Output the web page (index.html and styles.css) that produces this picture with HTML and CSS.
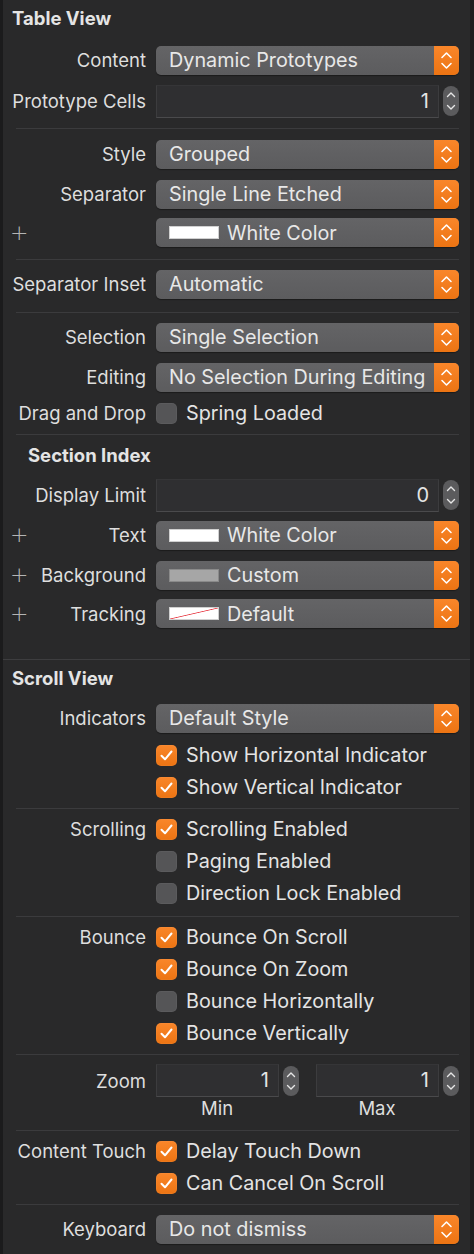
FILE: index.html
```html
<!DOCTYPE html>
<html>
<head>
<meta charset="utf-8">
<link rel="stylesheet" href="styles.css">
</head>
<body>
<div class="panel">
  <div class="title">Table View</div>

  <div class="row r-content"><span class="lbl">Content</span>
    <div class="popup"><span class="ptext">Dynamic Prototypes</span><span class="arrow"><svg viewBox="0 0 25 29" width="25" height="29"><path d="M8 11.5 L12.5 7 L17 11.5 M8 17.5 L12.5 22 L17 17.5" fill="none" stroke="#fff" stroke-width="1.6" stroke-linecap="round" stroke-linejoin="round"/></svg></span></div>
  </div>
  <div class="row r-field"><span class="lbl">Prototype Cells</span>
    <div class="numctl"><div class="field">1</div><div class="stepper"><svg viewBox="0 0 16 30" width="16" height="30"><path d="M4.5 10.5 L8 7 L11.5 10.5 M4.5 19.5 L8 23 L11.5 19.5" fill="none" stroke="#e6e6e6" stroke-width="1.4" stroke-linecap="round" stroke-linejoin="round"/></svg></div></div>
  </div>

  <div class="sep sep-a"></div>

  <div class="row r-style"><span class="lbl">Style</span>
    <div class="popup"><span class="ptext">Grouped</span><span class="arrow"><svg viewBox="0 0 25 29" width="25" height="29"><path d="M8 11.5 L12.5 7 L17 11.5 M8 17.5 L12.5 22 L17 17.5" fill="none" stroke="#fff" stroke-width="1.6" stroke-linecap="round" stroke-linejoin="round"/></svg></span></div>
  </div>
  <div class="row"><span class="lbl">Separator</span>
    <div class="popup"><span class="ptext">Single Line Etched</span><span class="arrow"><svg viewBox="0 0 25 29" width="25" height="29"><path d="M8 11.5 L12.5 7 L17 11.5 M8 17.5 L12.5 22 L17 17.5" fill="none" stroke="#fff" stroke-width="1.6" stroke-linecap="round" stroke-linejoin="round"/></svg></span></div>
  </div>
  <div class="row r-short"><span class="lbl"><span class="plus">+</span></span>
    <div class="popup"><span class="swatch sw-white"></span><span class="ptext sw-text">White Color</span><span class="arrow"><svg viewBox="0 0 25 29" width="25" height="29"><path d="M8 11.5 L12.5 7 L17 11.5 M8 17.5 L12.5 22 L17 17.5" fill="none" stroke="#fff" stroke-width="1.6" stroke-linecap="round" stroke-linejoin="round"/></svg></span></div>
  </div>

  <div class="sep sep-b"></div>

  <div class="row r-inset"><span class="lbl">Separator Inset</span>
    <div class="popup"><span class="ptext">Automatic</span><span class="arrow"><svg viewBox="0 0 25 29" width="25" height="29"><path d="M8 11.5 L12.5 7 L17 11.5 M8 17.5 L12.5 22 L17 17.5" fill="none" stroke="#fff" stroke-width="1.6" stroke-linecap="round" stroke-linejoin="round"/></svg></span></div>
  </div>

  <div class="sep sep-c"></div>

  <div class="row r-first"><span class="lbl">Selection</span>
    <div class="popup"><span class="ptext">Single Selection</span><span class="arrow"><svg viewBox="0 0 25 29" width="25" height="29"><path d="M8 11.5 L12.5 7 L17 11.5 M8 17.5 L12.5 22 L17 17.5" fill="none" stroke="#fff" stroke-width="1.6" stroke-linecap="round" stroke-linejoin="round"/></svg></span></div>
  </div>
  <div class="row"><span class="lbl">Editing</span>
    <div class="popup"><span class="ptext">No Selection During Editing</span><span class="arrow"><svg viewBox="0 0 25 29" width="25" height="29"><path d="M8 11.5 L12.5 7 L17 11.5 M8 17.5 L12.5 22 L17 17.5" fill="none" stroke="#fff" stroke-width="1.6" stroke-linecap="round" stroke-linejoin="round"/></svg></span></div>
  </div>
  <div class="row r-check"><span class="lbl">Drag and Drop</span>
    <label class="check"><span class="box"></span><span>Spring Loaded</span></label>
  </div>

  <div class="sep sep-d"></div>

  <div class="subtitle">Section Index</div>
  <div class="row"><span class="lbl">Display Limit</span>
    <div class="numctl"><div class="field">0</div><div class="stepper"><svg viewBox="0 0 16 30" width="16" height="30"><path d="M4.5 10.5 L8 7 L11.5 10.5 M4.5 19.5 L8 23 L11.5 19.5" fill="none" stroke="#e6e6e6" stroke-width="1.4" stroke-linecap="round" stroke-linejoin="round"/></svg></div></div>
  </div>
  <div class="row"><span class="lbl"><span class="plus">+</span><span class="ltxt">Text</span></span>
    <div class="popup"><span class="swatch sw-white"></span><span class="ptext sw-text">White Color</span><span class="arrow"><svg viewBox="0 0 25 29" width="25" height="29"><path d="M8 11.5 L12.5 7 L17 11.5 M8 17.5 L12.5 22 L17 17.5" fill="none" stroke="#fff" stroke-width="1.6" stroke-linecap="round" stroke-linejoin="round"/></svg></span></div>
  </div>
  <div class="row"><span class="lbl"><span class="plus">+</span><span class="ltxt">Background</span></span>
    <div class="popup"><span class="swatch sw-gray"></span><span class="ptext sw-text">Custom</span><span class="arrow"><svg viewBox="0 0 25 29" width="25" height="29"><path d="M8 11.5 L12.5 7 L17 11.5 M8 17.5 L12.5 22 L17 17.5" fill="none" stroke="#fff" stroke-width="1.6" stroke-linecap="round" stroke-linejoin="round"/></svg></span></div>
  </div>
  <div class="row r-short"><span class="lbl"><span class="plus">+</span><span class="ltxt">Tracking</span></span>
    <div class="popup"><span class="swatch sw-none"></span><span class="ptext sw-text">Default</span><span class="arrow"><svg viewBox="0 0 25 29" width="25" height="29"><path d="M8 11.5 L12.5 7 L17 11.5 M8 17.5 L12.5 22 L17 17.5" fill="none" stroke="#fff" stroke-width="1.6" stroke-linecap="round" stroke-linejoin="round"/></svg></span></div>
  </div>

  <div class="sep-full"></div>

  <div class="title title-2">Scroll View</div>
  <div class="row r-ind"><span class="lbl">Indicators</span>
    <div class="popup"><span class="ptext">Default Style</span><span class="arrow"><svg viewBox="0 0 25 29" width="25" height="29"><path d="M8 11.5 L12.5 7 L17 11.5 M8 17.5 L12.5 22 L17 17.5" fill="none" stroke="#fff" stroke-width="1.6" stroke-linecap="round" stroke-linejoin="round"/></svg></span></div>
  </div>
  <div class="row r-check r-after"><span class="lbl"></span>
    <label class="check"><span class="box on"><svg viewBox="0 0 21 21" width="21" height="21"><path d="M5.5 10.8 L9 14.3 L15.5 6.5" fill="none" stroke="#fff" stroke-width="2" stroke-linecap="round" stroke-linejoin="round"/></svg></span><span>Show Horizontal Indicator</span></label>
  </div>
  <div class="row r-check"><span class="lbl"></span>
    <label class="check"><span class="box on"><svg viewBox="0 0 21 21" width="21" height="21"><path d="M5.5 10.8 L9 14.3 L15.5 6.5" fill="none" stroke="#fff" stroke-width="2" stroke-linecap="round" stroke-linejoin="round"/></svg></span><span>Show Vertical Indicator</span></label>
  </div>

  <div class="sep sep-e"></div>

  <div class="row r-check r-first"><span class="lbl">Scrolling</span>
    <label class="check"><span class="box on"><svg viewBox="0 0 21 21" width="21" height="21"><path d="M5.5 10.8 L9 14.3 L15.5 6.5" fill="none" stroke="#fff" stroke-width="2" stroke-linecap="round" stroke-linejoin="round"/></svg></span><span>Scrolling Enabled</span></label>
  </div>
  <div class="row r-check"><span class="lbl"></span>
    <label class="check"><span class="box"></span><span>Paging Enabled</span></label>
  </div>
  <div class="row r-check"><span class="lbl"></span>
    <label class="check"><span class="box"></span><span>Direction Lock Enabled</span></label>
  </div>

  <div class="sep sep-f"></div>

  <div class="row r-check r-first"><span class="lbl">Bounce</span>
    <label class="check"><span class="box on"><svg viewBox="0 0 21 21" width="21" height="21"><path d="M5.5 10.8 L9 14.3 L15.5 6.5" fill="none" stroke="#fff" stroke-width="2" stroke-linecap="round" stroke-linejoin="round"/></svg></span><span>Bounce On Scroll</span></label>
  </div>
  <div class="row r-check"><span class="lbl"></span>
    <label class="check"><span class="box on"><svg viewBox="0 0 21 21" width="21" height="21"><path d="M5.5 10.8 L9 14.3 L15.5 6.5" fill="none" stroke="#fff" stroke-width="2" stroke-linecap="round" stroke-linejoin="round"/></svg></span><span>Bounce On Zoom</span></label>
  </div>
  <div class="row r-check"><span class="lbl"></span>
    <label class="check"><span class="box"></span><span>Bounce Horizontally</span></label>
  </div>
  <div class="row r-check"><span class="lbl"></span>
    <label class="check"><span class="box on"><svg viewBox="0 0 21 21" width="21" height="21"><path d="M5.5 10.8 L9 14.3 L15.5 6.5" fill="none" stroke="#fff" stroke-width="2" stroke-linecap="round" stroke-linejoin="round"/></svg></span><span>Bounce Vertically</span></label>
  </div>

  <div class="sep sep-g"></div>

  <div class="row r-zoom"><span class="lbl">Zoom</span>
    <div class="pair">
      <div class="numctl"><div class="field">1</div><div class="stepper"><svg viewBox="0 0 16 30" width="16" height="30"><path d="M4.5 10.5 L8 7 L11.5 10.5 M4.5 19.5 L8 23 L11.5 19.5" fill="none" stroke="#e6e6e6" stroke-width="1.4" stroke-linecap="round" stroke-linejoin="round"/></svg></div></div>
      <div class="numctl"><div class="field">1</div><div class="stepper"><svg viewBox="0 0 16 30" width="16" height="30"><path d="M4.5 10.5 L8 7 L11.5 10.5 M4.5 19.5 L8 23 L11.5 19.5" fill="none" stroke="#e6e6e6" stroke-width="1.4" stroke-linecap="round" stroke-linejoin="round"/></svg></div></div>
    </div>
  </div>
  <div class="row r-minmax"><span class="lbl"></span>
    <div class="pair"><span class="cap">Min</span><span class="cap">Max</span></div>
  </div>

  <div class="sep sep-h"></div>

  <div class="row r-check r-first"><span class="lbl">Content Touch</span>
    <label class="check"><span class="box on"><svg viewBox="0 0 21 21" width="21" height="21"><path d="M5.5 10.8 L9 14.3 L15.5 6.5" fill="none" stroke="#fff" stroke-width="2" stroke-linecap="round" stroke-linejoin="round"/></svg></span><span>Delay Touch Down</span></label>
  </div>
  <div class="row r-check"><span class="lbl"></span>
    <label class="check"><span class="box on"><svg viewBox="0 0 21 21" width="21" height="21"><path d="M5.5 10.8 L9 14.3 L15.5 6.5" fill="none" stroke="#fff" stroke-width="2" stroke-linecap="round" stroke-linejoin="round"/></svg></span><span>Can Cancel On Scroll</span></label>
  </div>

  <div class="sep sep-i"></div>

  <div class="row r-first"><span class="lbl">Keyboard</span>
    <div class="popup"><span class="ptext">Do not dismiss</span><span class="arrow"><svg viewBox="0 0 25 29" width="25" height="29"><path d="M8 11.5 L12.5 7 L17 11.5 M8 17.5 L12.5 22 L17 17.5" fill="none" stroke="#fff" stroke-width="1.6" stroke-linecap="round" stroke-linejoin="round"/></svg></span></div>
  </div>
</div>
</body>
</html>
```

FILE: styles.css
```css
html, body {
  margin: 0;
  padding: 0;
  background: #29292a;
}
body {
  font-family: "Inter", "Liberation Sans", sans-serif;
  font-size: 18.5px;
  color: #dedede;
}
.panel {
  width: 474px;
  height: 1254px;
  box-sizing: border-box;
  border-left: 3px solid #1b1b1c;
  border-right: 4px solid #1f1f20;
  background: #29292a;
  display: flex;
  flex-direction: column;
  overflow: hidden;
}
.title {
  height: 36px;
  line-height: 36px;
  padding-left: 9px;
  font-weight: 700;
  color: #e4e4e4;
}
.title-2 {
  height: 36px;
  line-height: 36px;
}
.subtitle {
  height: 40px;
  line-height: 40px;
  padding-left: 25px;
  font-weight: 700;
  color: #e4e4e4;
}
.row {
  display: grid;
  grid-template-columns: 143px 1fr;
  column-gap: 10px;
  padding-right: 11px;
  height: 40px;
  align-items: center;
}
.r-content { height: 48px; }
.r-field { height: 34px; }
.r-style { margin-top: 5px; }
.r-short { height: 37px; }
.r-inset { height: 48px; }
.r-first { margin-top: 4px; }
.r-check { height: 32px; }
.r-ind { margin-top: 2px; }
.r-after { margin-top: 1px; }
.r-zoom { height: 37px; margin-top: 7px; }
.r-minmax { height: 18px; }
.lbl {
  display: flex;
  align-items: center;
  justify-content: flex-end;
  white-space: nowrap;
  text-align: right;
}
.plus {
  margin-left: 7px;
  margin-right: auto;
  color: #b4b4b4;
  font-family: "DejaVu Sans", sans-serif;
  font-size: 22px;
  font-weight: 200;
  line-height: 1;
}
.sep {
  height: 1px;
  background: #3b3b3d;
  margin-left: 13px;
  margin-right: 11px;
  flex: none;
}
.sep-a { margin-top: 10px; }
.sep-b { margin-top: 8px; }
.sep-c { margin-top: 4px; }
.sep-d { margin-top: 5px; }
.sep-e { margin-top: 5px; }
.sep-f { margin-top: 7px; }
.sep-g { margin-top: 5px; }
.sep-h { margin-top: 13px; }
.sep-i { margin-top: 5px; }
.sep-full {
  height: 1px;
  background: #3d3d3f;
  margin-top: 27px;
  flex: none;
}
.popup {
  height: 29px;
  border-radius: 5px;
  background: linear-gradient(#646466, #5c5c5e);
  box-shadow: 0 1px 1px rgba(0,0,0,0.35);
  display: flex;
  align-items: center;
  overflow: hidden;
  color: #e8e8e8;
  font-size: 19.8px;
}
.ptext {
  flex: 1;
  padding-left: 13px;
  white-space: nowrap;
}
.ptext.sw-text { padding-left: 8px; }
.arrow {
  width: 25px;
  height: 29px;
  background: linear-gradient(#f9862a, #ec7413);
  display: flex;
  flex: none;
}
.swatch {
  width: 50px;
  height: 13px;
  margin-left: 13px;
  flex: none;
  box-sizing: border-box;
  border: 1px solid #8c8c8c;
}
.sw-white { background: #ffffff; border-color: #d0d0d0; }
.sw-gray { background: #a6a6a6; border-color: #8a8a8a; }
.sw-none {
  background: linear-gradient(to top left, #ffffff calc(50% - 0.8px), #e8404a 50%, #ffffff calc(50% + 0.8px));
  border-color: #d0d0d0;
}
.numctl {
  display: flex;
  align-items: center;
  gap: 4px;
}
.field {
  flex: 1;
  height: 33px;
  box-sizing: border-box;
  background: #2f2f31;
  border: 1px solid #3c3c3e;
  border-top-color: #353537;
  border-bottom-color: #4a4a4c;
  text-align: right;
  line-height: 31px;
  padding-right: 9px;
  color: #e4e4e4;
  font-size: 20px;
}
.stepper {
  width: 16px;
  height: 30px;
  border-radius: 8px;
  background: #5b5b5d;
  display: flex;
  flex: none;
}
.check {
  display: flex;
  align-items: center;
  gap: 9px;
  white-space: nowrap;
  color: #e4e4e4;
  font-size: 19.8px;
}
.box {
  width: 21px;
  height: 21px;
  border-radius: 5px;
  background: #555557;
  box-shadow: inset 0 0 0 1px rgba(255,255,255,0.04);
  display: flex;
  flex: none;
}
.box.on {
  background: linear-gradient(#f9862a, #ec7413);
}
.pair {
  display: grid;
  grid-template-columns: 1fr 1fr;
  column-gap: 17px;
}
.cap {
  text-align: center;
  padding-right: 21px;
  font-size: 18.5px;
  line-height: 18px;
}
```
